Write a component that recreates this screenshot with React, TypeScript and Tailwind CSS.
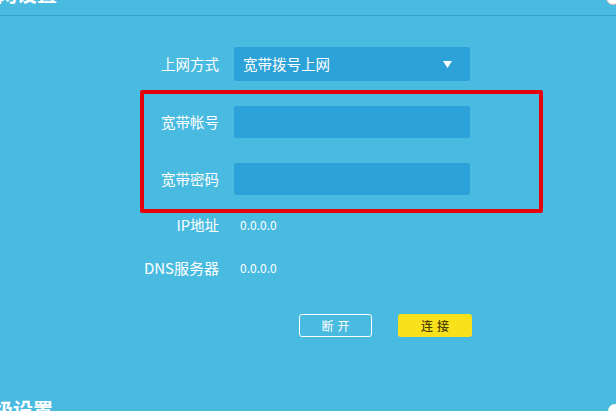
import React from "react";

const font = { fontFamily: '"Noto Sans CJK SC", "Noto Sans", sans-serif' };

export default function App() {
  return (
    <div
      className="w-[616px] h-[411px] overflow-hidden bg-[#4abbe0] text-white flex flex-col"
      style={font}
    >
      {/* header (scrolled partly off) */}
      <div className="h-[16px] shrink-0 border-b border-[#35a1cd] flex items-start justify-between">
        <div className="-mt-[16px] -ml-[23px] text-[20px] leading-[20px] font-bold whitespace-nowrap">
          上网设置
        </div>
        <div className="-mt-[9px] -mr-[4px] w-[14px] h-[14px] shrink-0 rounded-full bg-white border border-[#e9b8a8]" />
      </div>

      {/* 上网方式 */}
      <div className="mt-[31px] flex items-center">
        <div className="w-[219px] text-right text-[14.5px] leading-[20px]">上网方式</div>
        <div className="ml-[15px] w-[236px] h-[34px] rounded-[2px] bg-[#2ca2d8] flex items-center justify-between pl-[9px] pr-[18px]">
          <span className="text-[14.5px] leading-[20px]">宽带拨号上网</span>
          <svg width="9" height="7" viewBox="0 0 9 7">
            <path d="M0 0 H9 L4.5 7 Z" fill="white" />
          </svg>
        </div>
      </div>

      {/* highlighted box */}
      <div className="mt-[9px] ml-[140px] w-[403px] border-[4px] border-[#e5000c] rounded-[2px] pt-[12px] pb-[14px] flex flex-col gap-[25px]">
        <div className="flex items-center">
          <div className="w-[75px] text-right text-[14.5px] leading-[20px]">宽带帐号</div>
          <div className="ml-[15px] w-[236px] h-[32px] rounded-[2px] bg-[#2ca2d8]" />
        </div>
        <div className="flex items-center">
          <div className="w-[75px] text-right text-[14.5px] leading-[20px]">宽带密码</div>
          <div className="ml-[15px] w-[236px] h-[32px] rounded-[2px] bg-[#2ca2d8]" />
        </div>
      </div>

      {/* info rows */}
      <div className="mt-[2px] flex items-center h-[20px]">
        <div className="w-[219px] text-right text-[14.5px] leading-[20px]">IP地址</div>
        <div className="ml-[21px] text-[12px] leading-[20px]">0.0.0.0</div>
      </div>
      <div className="mt-[23px] flex items-center h-[20px]">
        <div className="w-[219px] text-right text-[15px] leading-[20px]">DNS服务器</div>
        <div className="ml-[21px] text-[12px] leading-[20px]">0.0.0.0</div>
      </div>

      {/* buttons */}
      <div className="mt-[36px] ml-[299px] flex gap-[26px]">
        <button className="w-[73px] h-[23px] rounded-[3px] border border-white text-[12px] leading-[20px] tracking-[4px] pl-[4px] text-white">
          断开
        </button>
        <button className="w-[74px] h-[23px] rounded-[3px] bg-[#f9e21c] text-[12px] leading-[20px] tracking-[4px] pl-[4px] text-[#4d4400] font-medium">
          连接
        </button>
      </div>

      {/* next section header (scrolled partly in) */}
      <div className="mt-[63px] flex items-start justify-between">
        <div className="-ml-[27px] text-[20px] leading-[20px] font-bold whitespace-nowrap">
          高级设置
        </div>
        <div className="mt-[4px] -mr-[6px] w-[14px] h-[14px] shrink-0 rounded-full bg-white" />
      </div>
    </div>
  );
}
